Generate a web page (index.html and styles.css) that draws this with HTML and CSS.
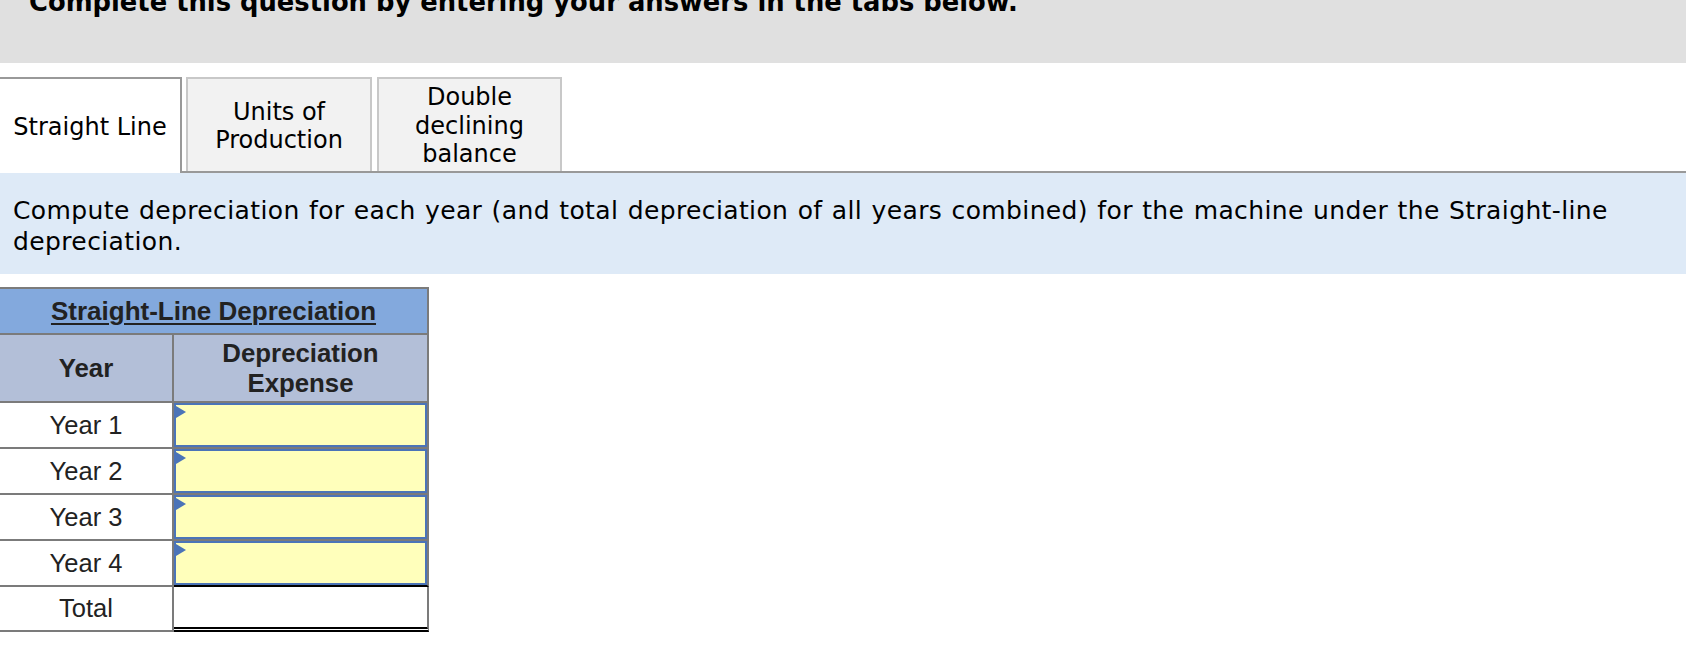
FILE: index.html
```html
<!DOCTYPE html>
<html lang="en">
<head>
<meta charset="utf-8">
<title>Straight-Line Depreciation</title>
<link rel="stylesheet" href="styles.css">
</head>
<body>
<div class="banner">
  <h1 class="banner-title">Complete this question by entering your answers in the tabs below.</h1>
</div>

<div class="tabs">
  <div class="tab tab-active tab-first"><span>Straight Line</span></div>
  <div class="tab tab-second"><span>Units of<br>Production</span></div>
  <div class="tab tab-third"><span>Double<br>declining<br>balance</span></div>
</div>

<div class="instructions">
  <p>Compute depreciation for each year (and total depreciation of all years combined) for the machine under the Straight-line depreciation.</p>
</div>

<table class="sl-table">
  <tr>
    <th class="sl-title" colspan="2"><u>Straight-Line Depreciation</u></th>
  </tr>
  <tr>
    <th class="sl-head sl-year-col">Year</th>
    <th class="sl-head sl-val-col">Depreciation<br>Expense</th>
  </tr>
  <tr>
    <td class="sl-year">Year 1</td>
    <td class="sl-val"><div class="sl-input"><span class="sl-flag"></span></div></td>
  </tr>
  <tr>
    <td class="sl-year">Year 2</td>
    <td class="sl-val"><div class="sl-input"><span class="sl-flag"></span></div></td>
  </tr>
  <tr>
    <td class="sl-year">Year 3</td>
    <td class="sl-val"><div class="sl-input"><span class="sl-flag"></span></div></td>
  </tr>
  <tr>
    <td class="sl-year">Year 4</td>
    <td class="sl-val sl-val-last"><div class="sl-input"><span class="sl-flag"></span></div></td>
  </tr>
  <tr>
    <td class="sl-year sl-year-total">Total</td>
    <td class="sl-val sl-total"></td>
  </tr>
</table>
</body>
</html>
```

FILE: styles.css
```css
html, body {
  margin: 0;
  padding: 0;
  background: #ffffff;
}

body {
  font-family: "DejaVu Sans", Verdana, sans-serif;
  color: #000;
  overflow: hidden;
}

/* top grey banner */
.banner {
  background: #e0e0e0;
  height: 63px;
  overflow: hidden;
}

.banner-title {
  margin: -11px 0 0 29px;
  font-size: 25.8px;
  line-height: 26px;
  font-weight: bold;
  color: #000;
  white-space: nowrap;
}

/* tabs */
.tabs {
  display: flex;
  gap: 4px;
  margin-top: 14px;
  height: 94px;
  border-bottom: 2px solid #999;
}

.tab {
  box-sizing: border-box;
  display: flex;
  align-items: center;
  justify-content: center;
  text-align: center;
  font-size: 24px;
  line-height: 28.5px;
  background: #f2f2f2;
  border: 2px solid #c8c8c8;
  border-bottom: 0;
  height: 94px;
  padding-top: 2px;
}

.tab-active {
  background: #ffffff;
  border: 2px solid #999;
  border-left: 0;
  border-bottom: 0;
  height: 96px;
  margin-bottom: -2px;
  position: relative;
}

.tab-first { width: 182px; }
.tab-second { width: 186px; }
.tab-third { width: 185px; margin-left: 1px; }

/* instructions band */
.instructions {
  background: #deeaf7;
  padding: 22px 13px 17px;
}

.instructions p {
  margin: 0;
  font-size: 25px;
  line-height: 31px;
  word-spacing: 1px;
  letter-spacing: 0.38px;
}

/* table */
.sl-table {
  margin-top: 13px;
  border-collapse: separate;
  border-spacing: 0;
  border-top: 2px solid #7b7b7b;
  font-family: "Liberation Sans", Arial, sans-serif;
  color: #222;
}

.sl-table th,
.sl-table td {
  padding: 0;
  border-right: 2px solid #7b7b7b;
  border-bottom: 2px solid #7b7b7b;
}

.sl-title {
  background: #83a9dd;
  height: 44px;
  font-size: 26px;
  font-weight: bold;
  text-align: center;
  line-height: 44px;
}

.sl-title u {
  text-decoration-thickness: 2px;
  text-underline-offset: 3px;
}

.sl-head {
  background: #b3bfd8;
  height: 66px;
  font-size: 25.8px;
  font-weight: bold;
  line-height: 30px;
  text-align: center;
}

.sl-year-col { width: 172px; }
.sl-val-col { width: 253px; }

.sl-year {
  width: 172px;
  text-align: center;
  font-size: 25.5px;
  line-height: 44px;
  background: #fff;
}

.sl-val {
  width: 253px;
}

.sl-val-last {
  border-bottom-color: #000 !important;
}

.sl-input {
  box-sizing: border-box;
  position: relative;
  height: 44px;
  background: #ffffbb;
  border: 2px solid #4b74b8;
}

.sl-flag {
  position: absolute;
  left: 0;
  top: 1px;
  width: 0;
  height: 0;
  border-left: 10px solid #4b74b8;
  border-top: 6px solid transparent;
  border-bottom: 6px solid transparent;
}

.sl-year-total {
  line-height: 43px;
}

.sl-total {
  height: 40px;
  background: #fff;
  border-bottom: 5px double #000 !important;
}
```
